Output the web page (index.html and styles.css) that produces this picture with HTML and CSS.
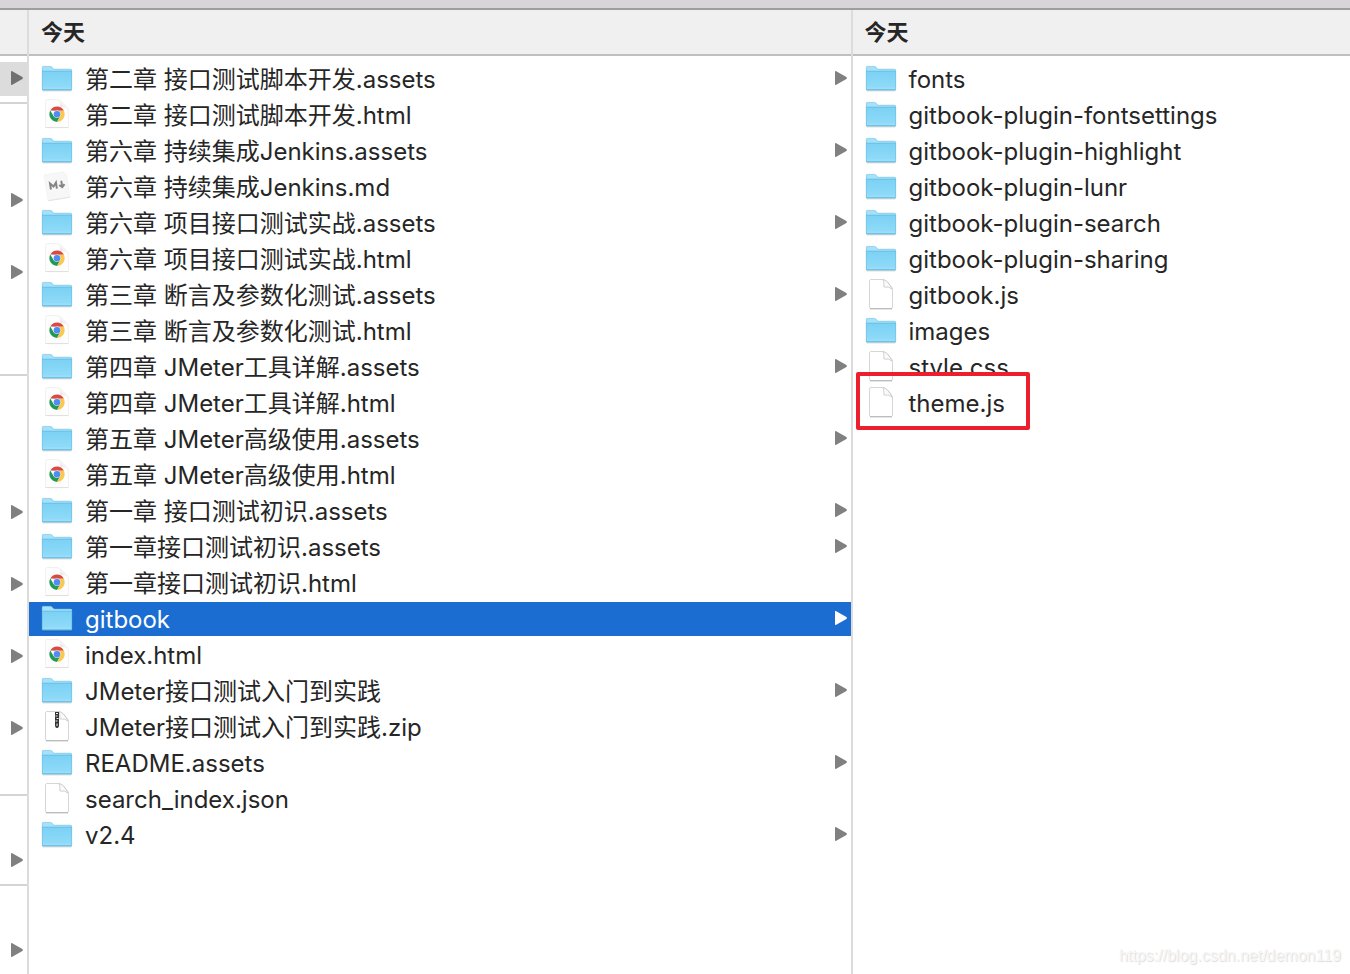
FILE: index.html
```html
<!DOCTYPE html>
<html lang="zh-CN">
<head>
<meta charset="utf-8">
<title>gitbook</title>
<link rel="stylesheet" href="styles.css">
</head>
<body>
<svg class="sprite" aria-hidden="true">
  <defs>
    <linearGradient id="front" x1="0" y1="0" x2="0" y2="1"><stop offset="0" stop-color="#7bd1f4"/><stop offset="1" stop-color="#92dcf9"/></linearGradient>
    <linearGradient id="fold" x1="0" y1="1" x2="1" y2="0"><stop offset="0" stop-color="#c8c8c8"/><stop offset=".55" stop-color="#f6f6f6"/><stop offset="1" stop-color="#e4e4e4"/></linearGradient>
  </defs>
  <symbol id="folder" viewBox="0 0 32 32">
    <path d="M1.5 27.8h29" stroke="#000" stroke-opacity=".22" stroke-width="1"/>
    <path d="M1 26V4.600Q1 3.300 2.300 3.300H9.300Q10.300 3.300 11 4.100L12.300 5.600Q12.800 6 13.500 6H29.700Q31 6 31 7.200V26Z" fill="#a5e1fa"/>
    <path d="M1.300 8V4.700Q1.300 3.400 2.400 3.400H9.300Q10.300 3.400 11 4.200L12.300 5.700Q12.800 6.200 13.500 6.200H29.600Q30.800 6.300 30.800 8" fill="none" stroke="#7fc4e2" stroke-width=".6"/>
    <path d="M1 8H31V26.200Q31 27.200 30 27.200H2Q1 27.200 1 26.200Z" fill="url(#front)"/>
    <path d="M1 8.200H31" stroke="#68bde2" stroke-width=".9"/>
    <path d="M1.300 8V26.500M30.700 8V26.500" stroke="#69bbdf" stroke-width=".6"/>
    <path d="M2 25.200H30" stroke="#a8e3fa" stroke-width=".7"/>
    <path d="M1.300 26.800H30.700" stroke="#5fb2d8" stroke-width=".9"/>
  </symbol>
  <symbol id="page" viewBox="0 1 32 32">
    <path d="M5 31.300H27" stroke="#000" stroke-opacity=".13" stroke-width="1"/>
    <path d="M4.500 3Q4.500 1.500 6 1.500H17.500Q20 1.500 22.500 4L25 7Q27.500 9.500 27.500 12V29Q27.500 30.500 26 30.500H6Q4.500 30.500 4.500 29Z" fill="#fff" stroke="#d6d6d6"/>
    <path d="M5 30.500H27" stroke="#bcbcbc"/>
    <path d="M17.800 1.600Q19.300 3 18.900 9Q24.500 8.300 27.200 11.200Q25 7 22.500 4.200Q20 1.700 17.800 1.600Z" fill="#fafafa" stroke="#c6c6c6" stroke-width=".8"/>
  </symbol>
  <symbol id="chrome" viewBox="0 0 32 32">
    <path d="M4.500 2.500Q4.500 .5 6 .5H16Q19 .5 22 4L27.500 10V28.500H4.500Z" fill="#fdfdfd" stroke="#efefef" stroke-width=".9"/>
    <path d="M4.500 28.600H27.500" stroke="#dedede"/>
    <path d="M16 .6Q19.500 2 19.500 8Q24.500 7 27.300 10.500L22 4Q19 .8 16 .6Z" fill="url(#fold)"/>
    <g transform="translate(16 15.200)">
      <path d="M-6.700-3.700A7.700 7.700 0 0 1 6.800-3.500H0Z" fill="#d94a43"/>
      <path d="M-6.700-3.700A7.700 7.700 0 0 0 0 7.700L3.300 2 0 0-3.300 2Z" fill="#219a58"/>
      <path d="M0 7.700A7.700 7.700 0 0 0 6.800-3.500H0L3.300 2Z" fill="#fbc84b"/>
      <circle r="3.700" fill="#dfe6ee"/><circle r="3.200" fill="#4f8df5"/>
    </g>
  </symbol>
  <symbol id="markdown" viewBox="0 1 32 32">
    <g transform="rotate(-9 16 16)">
      <path d="M5 3H24L27 6V29H5Z" fill="#f7f7f7" stroke="#f0f0f0" stroke-width=".7"/>
      <path d="M5 29.200H27" stroke="#e2e2e2"/>
      <path d="M9.500 18.500V12.500L12.500 16 15.500 12.500V18.500" fill="none" stroke="#858585" stroke-width="2"/>
      <path d="M21 11.500V16.500M18.300 15.300L21 18 23.700 15.300" fill="none" stroke="#858585" stroke-width="2"/>
    </g>
  </symbol>
  <symbol id="zip" viewBox="0 0 32 32">
    <use href="#page"/>
    <path d="M14 1H18V14Q18 17 16 17T14 14Z" fill="#333"/>
    <path d="M15 2.500h2M14.500 5h2M15.500 7.500h2M14.500 10h2" stroke="#f2f2f2" stroke-width="1.100"/>
    <path d="M15.500 12.500h1v2.500h-1z" fill="#f2f2f2"/>
  </symbol>
  <symbol id="arrow" viewBox="0 0 12 14">
    <path d="M.8 .1 11.400 6.100Q12.400 7 11.400 7.900L.8 13.900Q0 14.200 0 13.300V.7Q0-.2 .8 .1Z" fill="currentColor"/>
  </symbol>
</svg>

<div class="window">
  <div class="toolbar"></div>
  <main class="columns">
    <section class="column column-parent" aria-label="上级目录"></section>
    <section class="column column-middle">
      <h2 class="heading">今天</h2>
      <ul class="list" id="middle"></ul>
    </section>
    <section class="column column-last">
      <h2 class="heading">今天</h2>
      <ul class="list" id="last"></ul>
    </section>
  </main>
  <div class="watermark">https://blog.csdn.net/demon119</div>
</div>
<script src="script.js"></script>
</body>
</html>
```
FILE: styles.css
```css
*,
*::before {
  box-sizing: border-box;
}

body {
  margin: 0;
  background: #fff;
  color: #262626;
  font-family: Inter, "Noto Sans CJK SC", sans-serif;
}

.sprite {
  position: absolute;
  width: 0;
  height: 0;
}

.window {
  position: relative;
  display: flex;
  flex-direction: column;
  height: 100vh;
  overflow: hidden;
}

.toolbar {
  flex: none;
  height: 10px;
  background: #d8d5d9;
  border-bottom: 2px solid #a09da1;
}

.columns {
  flex: 1;
  display: grid;
  grid-template-columns: 29px 61vw 1fr;
  min-height: 0;
}

.column {
  min-width: 0;
  overflow: hidden;
  border-right: 2px solid #dcdcdc;
}

.column-last {
  border-right: 0;
}

.heading {
  height: 46px;
  margin: 0;
  padding-left: 12px;
  background: #f0f0f0;
  border-bottom: 2px solid #bfbfbf;
  font-size: 22px;
  font-weight: 700;
  line-height: 44px;
}

.list {
  display: flex;
  flex-direction: column;
  gap: 2px;
  margin: 0;
  padding: 6px 0;
  list-style: none;
}

.row {
  display: flex;
  align-items: center;
  gap: 12px;
  width: 100%;
  height: 34px;
  padding: 0 4px 0 12px;
  border: 0;
  background: none;
  color: inherit;
  font: inherit;
  font-size: 24px;
  line-height: 32px;
  text-align: left;
}

.row-selected {
  background: #1c6dd2;
  color: #fff;
}

.icon {
  flex: none;
  width: 32px;
  height: 32px;
}

.name {
  flex: 1;
  padding-top: 2px;
  white-space: nowrap;
}

.arrow {
  flex: none;
  width: 12px;
  height: 14px;
  margin-bottom: 2px;
  color: #808080;
}

.row-selected .arrow {
  color: #fff;
}

.group {
  border-bottom: 2px solid #d4d4d4;
  padding: 12px 0;
}

.group:last-child {
  border-bottom: 0;
}

.group-first {
  padding: 6px 0;
}

.group-second {
  padding-top: 8px;
}

.group-short {
  padding-bottom: 6px;
}

.row-parent {
  background: #dcdcdc;
}

.row-parent .arrow {
  color: #707070;
}

.column-parent .row {
  justify-content: flex-end;
  padding-left: 0;
}

.marked {
  position: relative;
}

.marked::before {
  content: "";
  position: absolute;
  top: -14px;
  left: 3px;
  width: 174px;
  height: 58px;
  border: 4px solid #ec1f2d;
  border-radius: 2px;
  background: linear-gradient(to right, transparent 40px, #fff 40px);
}

.marked .row {
  position: relative;
}

.watermark {
  position: absolute;
  right: 9px;
  bottom: 9px;
  color: #f6f6f6;
  font-family: "Liberation Sans", sans-serif;
  font-size: 16px;
  line-height: 18px;
  text-shadow: 1px 1px 1px #dcdcdc;
}
```
FILE: script.js
```js
const middle = [
  ["folder", "第二章 接口测试脚本开发.assets", true],
  ["chrome", "第二章 接口测试脚本开发.html"],
  ["folder", "第六章 持续集成Jenkins.assets", true],
  ["markdown", "第六章 持续集成Jenkins.md"],
  ["folder", "第六章 项目接口测试实战.assets", true],
  ["chrome", "第六章 项目接口测试实战.html"],
  ["folder", "第三章 断言及参数化测试.assets", true],
  ["chrome", "第三章 断言及参数化测试.html"],
  ["folder", "第四章 JMeter工具详解.assets", true],
  ["chrome", "第四章 JMeter工具详解.html"],
  ["folder", "第五章 JMeter高级使用.assets", true],
  ["chrome", "第五章 JMeter高级使用.html"],
  ["folder", "第一章 接口测试初识.assets", true],
  ["folder", "第一章接口测试初识.assets", true],
  ["chrome", "第一章接口测试初识.html"],
  ["folder", "gitbook", true, "selected"],
  ["chrome", "index.html"],
  ["folder", "JMeter接口测试入门到实践", true],
  ["zip", "JMeter接口测试入门到实践.zip"],
  ["folder", "README.assets", true],
  ["page", "search_index.json"],
  ["folder", "v2.4", true]
];

const last = [
  ["folder", "fonts"],
  ["folder", "gitbook-plugin-fontsettings"],
  ["folder", "gitbook-plugin-highlight"],
  ["folder", "gitbook-plugin-lunr"],
  ["folder", "gitbook-plugin-search"],
  ["folder", "gitbook-plugin-sharing"],
  ["page", "gitbook.js"],
  ["folder", "images"],
  ["page", "style.css"],
  ["page", "theme.js", false, "marked"]
];

// Rows of each parent group: 2 is the open directory, 1 a directory, 0 a file.
const groups = [
  ["group-first", [2]],
  ["group-second", [0, 0, 1, 0, 1, 0, 0]],
  ["", [0, 0, 0, 1, 0, 1, 0, 1, 0, 1, 0]],
  ["group-short", [0, 1]],
  ["", [0, 1]]
];

const arrow = '<svg class="arrow" aria-hidden="true"><use href="#arrow"/></svg>';

function fill(id, items) {
  document.getElementById(id).innerHTML = items.map(([icon, name, open, state]) => `
    <li class="${state === "marked" ? "marked" : ""}">
      <button type="button" class="row ${state === "selected" ? "row-selected" : ""}">
        <svg class="icon" aria-hidden="true"><use href="#${icon}"/></svg>
        <span class="name">${name}</span>${open ? arrow : ""}
      </button>
    </li>`).join("");
}

fill("middle", middle);
fill("last", last);

document.querySelector(".column-parent").innerHTML =
  '<div class="heading"></div>' +
  groups.map(([kind, rows]) => `<ul class="list group ${kind}">${rows.map(r =>
    `<li><div class="row ${r === 2 ? "row-parent" : ""}">${r ? arrow : ""}</div></li>`).join("")}</ul>`).join("");
```
